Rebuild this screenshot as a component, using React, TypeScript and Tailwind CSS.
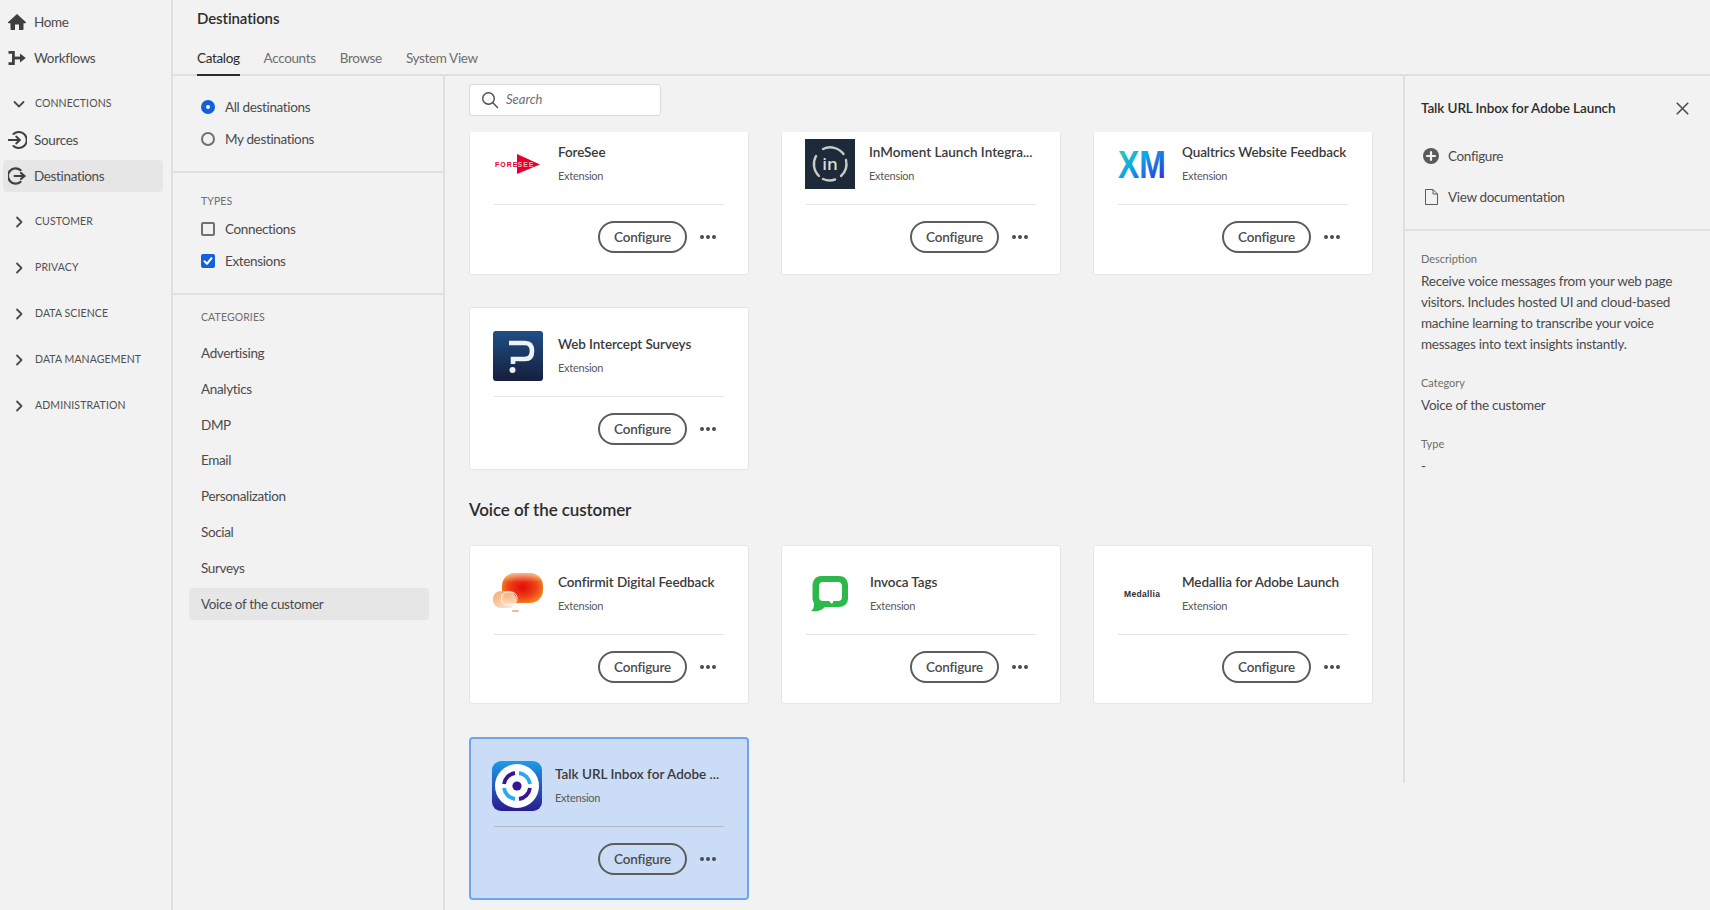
import React from "react";

const font = { fontFamily: 'Lato, sans-serif' };

function Chevron({ open }: { open?: boolean }) {
  return (
    <svg width="12" height="12" viewBox="0 0 12 12" className="text-[#4b4b4b]" fill="none" stroke="currentColor" strokeWidth="1.8" strokeLinecap="round" strokeLinejoin="round">
      {open ? <path d="M1.5 4 L6 8.5 L10.5 4" /> : <path d="M4 1.5 L8.5 6 L4 10.5" />}
    </svg>
  );
}

function HomeIcon() {
  return (
    <svg width="18" height="16" viewBox="0 0 18 16" fill="#3f3f3f">
      <path d="M9 0 L18 8.2 C18.2 8.8 17.8 9.2 17.3 9.2 L15.5 9.2 L15.5 15.2 C15.5 15.6 15.2 16 14.8 16 L11 16 L11 10.5 L7 10.5 L7 16 L3.2 16 C2.8 16 2.5 15.6 2.5 15.2 L2.5 9.2 L0.7 9.2 C0.2 9.2 -0.2 8.8 0 8.2 Z" />
    </svg>
  );
}

function WorkflowIcon() {
  return (
    <svg width="18" height="14" viewBox="0 0 18 14" fill="none" stroke="#3f3f3f" strokeWidth="2.8">
      <path d="M0.5 1.4 H5.4 V12.6 H0.5" />
      <path d="M5 7 H13" />
      <path d="M12 2.6 L17.8 7 L12 11.4 Z" fill="#3f3f3f" stroke="none" />
    </svg>
  );
}

function SourcesIcon() {
  return (
    <svg width="19" height="18" viewBox="0 0 19 18" fill="none" stroke="#3f3f3f" strokeWidth="2" strokeLinecap="round">
      <path d="M5.5 3 A8 8 0 1 1 5.5 15" />
      <path d="M0.8 9 H11.5" />
      <path d="M8.2 5.6 L11.8 9 L8.2 12.4" strokeLinejoin="round" />
    </svg>
  );
}

function DestIcon() {
  return (
    <svg width="18" height="18" viewBox="0 0 18 18" fill="none" stroke="#3f3f3f" strokeWidth="2.2" strokeLinecap="round">
      <path d="M12.5 3.2 A7.6 7.6 0 1 0 12.5 14.8" />
      <path d="M6.5 9 H16" />
      <path d="M13 6 L16.6 9 L13 12" strokeLinejoin="round" />
    </svg>
  );
}

function NavItem({ icon, label, active }: { icon: React.ReactNode; label: string; active?: boolean }) {
  return (
    <div className={active ? "flex h-8 items-center rounded bg-[#e6e6e6] pl-[5px] mr-2 ml-[3px]" : "flex h-8 items-center pl-[5px] mr-2 ml-[3px]"}>
      <span className="flex w-[26px] justify-start">{icon}</span>
      <span className="text-[13.5px] tracking-[-0.35px] text-[#4b4b4b]">{label}</span>
    </div>
  );
}

function Section({ label, open }: { label: string; open?: boolean }) {
  return (
    <div className="flex h-8 items-center pl-[13px]">
      <span className="flex w-[22px]"><Chevron open={open} /></span>
      <span className="text-[10.5px] tracking-[0.1px] text-[#505050]">{label}</span>
    </div>
  );
}

function Sidebar() {
  return (
    <aside className="w-[173px] shrink-0 border-r-2 border-[#dfdfdf] pt-[6px]">
      <NavItem icon={<HomeIcon />} label="Home" />
      <div className="h-[4px]" />
      <NavItem icon={<WorkflowIcon />} label="Workflows" />
      <div className="h-[14px]" />
      <Section label="CONNECTIONS" open />
      <div className="h-1" />
      <NavItem icon={<SourcesIcon />} label="Sources" />
      <div className="h-[4px]" />
      <NavItem icon={<DestIcon />} label="Destinations" active />
      <div className="h-[14px]" />
      <div className="flex flex-col gap-[14px]">
        <Section label="CUSTOMER" />
        <Section label="PRIVACY" />
        <Section label="DATA SCIENCE" />
        <Section label="DATA MANAGEMENT" />
        <Section label="ADMINISTRATION" />
      </div>
    </aside>
  );
}

function Tabs() {
  const tabs = ["Catalog", "Accounts", "Browse", "System View"];
  return (
    <header className="h-[76px] border-b-2 border-[#dfdfdf] pl-[24px]">
      <h1 className="pt-[7px] text-[15px] font-semibold leading-[22px] tracking-[-0.1px] text-[#2c2c2c]">Destinations</h1>
      <div className="mt-[18px] flex gap-[24px]">
        {tabs.map((t, i) => (
          <div key={t} className={i === 0 ? "h-[29px] border-b-2 border-[#2c2c2c] text-[13.5px] leading-[22px] tracking-[-0.35px] text-[#2c2c2c]" : "h-[29px] text-[13.5px] leading-[22px] tracking-[-0.35px] text-[#6e6e6e]"}>
            {t}
          </div>
        ))}
      </div>
    </header>
  );
}

function Filters() {
  const cats = ["Advertising", "Analytics", "DMP", "Email", "Personalization", "Social", "Surveys", "Voice of the customer"];
  return (
    <div className="w-[272px] shrink-0 border-r-2 border-[#dfdfdf]">
      <div className="flex h-[97px] flex-col gap-[18px] border-b-2 border-[#dfdfdf] pl-[28px] pt-[24px]">
        <label className="flex h-[14px] items-center gap-[10px]">
          <span className="flex h-[14px] w-[14px] items-center justify-center rounded-full bg-[#1260e0]">
            <span className="h-[4px] w-[4px] rounded-full bg-white" />
          </span>
          <span className="text-[13.5px] tracking-[-0.35px] text-[#4b4b4b]">All destinations</span>
        </label>
        <label className="flex h-[14px] items-center gap-[10px]">
          <span className="h-[14px] w-[14px] rounded-full border-2 border-[#707070]" />
          <span className="text-[13.5px] tracking-[-0.35px] text-[#4b4b4b]">My destinations</span>
        </label>
      </div>
      <div className="h-[122px] border-b-2 border-[#dfdfdf] pl-[28px] pt-[20px]">
        <div className="text-[10.5px] leading-[16px] tracking-[0.1px] text-[#6e6e6e]">TYPES</div>
        <div className="mt-[13px] flex flex-col gap-[18px]">
          <label className="flex h-[14px] items-center gap-[10px]">
            <span className="h-[14px] w-[14px] rounded-[2px] border-2 border-[#707070]" />
            <span className="text-[13.5px] tracking-[-0.35px] text-[#4b4b4b]">Connections</span>
          </label>
          <label className="flex h-[14px] items-center gap-[10px]">
            <span className="flex h-[14px] w-[14px] items-center justify-center rounded-[2px] bg-[#1260e0]">
              <svg width="10" height="10" viewBox="0 0 10 10" fill="none" stroke="white" strokeWidth="2" strokeLinecap="round" strokeLinejoin="round">
                <path d="M1.5 5.2 L4 7.8 L8.5 2.2" />
              </svg>
            </span>
            <span className="text-[13.5px] tracking-[-0.35px] text-[#4b4b4b]">Extensions</span>
          </label>
        </div>
      </div>
      <div className="pt-[14px]">
        <div className="pl-[28px] text-[10.5px] leading-[16px] tracking-[0.1px] text-[#6e6e6e]">CATEGORIES</div>
        <div className="mt-[12px] flex flex-col gap-[3.85px] pl-[16px] pr-[14px]">
          {cats.map((c, i) => (
            <div key={c} className={i === 7 ? "flex h-[32px] items-center rounded bg-[#e6e6e6] pl-[12px] text-[13.5px] tracking-[-0.35px] text-[#4b4b4b]" : "flex h-[32px] items-center pl-[12px] text-[13.5px] tracking-[-0.35px] text-[#4b4b4b]"}>
              {c}
            </div>
          ))}
        </div>
      </div>
    </div>
  );
}

function ForeSeeLogo() {
  return (
    <svg width="50" height="50" viewBox="1 0 50 50">
      <path d="M25 15 L48 25.5 L25 35 Z" fill="#e4002b" />
      <text x="3" y="28" fontSize="7" fontWeight="700" letterSpacing="1" fill="#e4002b" style={{ fontFamily: '"Liberation Sans", sans-serif' }}>FORE</text>
      <text x="25.5" y="28" fontSize="7" fontWeight="700" letterSpacing="1" fill="#f7a8b5" style={{ fontFamily: '"Liberation Sans", sans-serif' }}>SEE</text>
    </svg>
  );
}

function InMomentLogo() {
  return (
    <svg width="50" height="50" viewBox="0 0 50 50">
      <rect width="50" height="50" fill="#1c2a39" />
      <g fill="none" stroke="#c9c9c5" strokeWidth="2.4" strokeLinecap="round">
        <path d="M18 10 A16.5 16.5 0 0 1 38.5 15" />
        <path d="M41 21 A16.5 16.5 0 0 1 36 37" />
        <path d="M30 40.5 A16.5 16.5 0 0 1 18 40" />
        <path d="M14 37 A16.5 16.5 0 0 1 11 17" />
      </g>
      <text x="25" y="31" textAnchor="middle" fontSize="17" fontWeight="600" fill="#d8d8d4" style={{ fontFamily: '"Open Sans", sans-serif' }}>in</text>
    </svg>
  );
}

function XMLogo() {
  return (
    <svg width="50" height="50" viewBox="0 0 50 50">
      <defs>
        <linearGradient id="xmg" x1="0" y1="0" x2="1" y2="1">
          <stop offset="0" stopColor="#2fdca0" />
          <stop offset="0.4" stopColor="#12a8e8" />
          <stop offset="1" stopColor="#3a10d8" />
        </linearGradient>
      </defs>
      <text transform="translate(1 39) scale(0.82 1)" fontSize="39" fontWeight="700" fill="url(#xmg)" style={{ fontFamily: '"Liberation Sans", sans-serif' }}>XM</text>
    </svg>
  );
}

function SurveyLogo() {
  return (
    <svg width="50" height="50" viewBox="0 0 50 50">
      <defs>
        <linearGradient id="sv" x1="0" y1="0" x2="0" y2="1">
          <stop offset="0" stopColor="#1f4e86" />
          <stop offset="1" stopColor="#161f3d" />
        </linearGradient>
      </defs>
      <rect width="50" height="50" rx="3" fill="url(#sv)" />
      <path d="M16 12 H32 C37 12 39 15 39 20 C39 25 37 28 32 28 H20 V33" fill="none" stroke="#eef1f6" strokeWidth="4.6" />
      <circle cx="19.5" cy="39" r="3" fill="#eef1f6" />
    </svg>
  );
}

function ConfirmitLogo() {
  return (
    <svg width="50" height="50" viewBox="1 0 50 50">
      <defs>
        <radialGradient id="cf" cx="0.5" cy="0.48" r="0.62">
          <stop offset="0" stopColor="#e30a0a" />
          <stop offset="0.55" stopColor="#ec4318" />
          <stop offset="1" stopColor="#f79a1e" />
        </radialGradient>
        <linearGradient id="gl" x1="0" y1="0" x2="0" y2="1">
          <stop offset="0" stopColor="#ffffff" stopOpacity="0.5" />
          <stop offset="0.3" stopColor="#ffffff" stopOpacity="0" />
        </linearGradient>
        <linearGradient id="cf2" x1="0" y1="0" x2="1" y2="1">
          <stop offset="0" stopColor="#f5a05e" />
          <stop offset="1" stopColor="#fdeee0" />
        </linearGradient>
      </defs>
      <rect x="10" y="4" width="41" height="30" rx="13" fill="url(#cf)" />
      <rect x="10" y="4" width="41" height="30" rx="13" fill="url(#gl)" />
      <rect x="1" y="22" width="23" height="17" rx="8" fill="url(#cf2)" opacity="0.92" />
      <rect x="9.5" y="23" width="15.5" height="13" rx="6" fill="none" stroke="#fff" strokeWidth="0.9" />
      <rect x="20" y="41" width="7" height="2" rx="1" fill="#f6b98a" />
    </svg>
  );
}

function InvocaLogo() {
  return (
    <svg width="50" height="50" viewBox="0 0 50 50">
      <path fillRule="evenodd" fill="#2db84b" d="M16 7 H34 C40 7 43 11 43 17 V29 C43 35 39 38 33 38 H20 C16 42 12 43 6 42 C9 40 9 37 9 34 C8 32 7.5 31 7.5 29 V17 C7.5 11 11 7 16 7 Z M18 13 C15.5 13 14 14.5 14 17 V28 C14 30.5 15.5 32 18 32 H24 L27 35 L28.5 32 H33 C35.5 32 37 30.5 37 28 V17 C37 14.5 35.5 13 33 13 Z" />
    </svg>
  );
}

function MedalliaLogo() {
  return (
    <svg width="50" height="50" viewBox="0 0 50 50">
      <text x="7" y="28" fontSize="8.5" fontWeight="700" textLength="36" fill="#2c2c2c" style={{ fontFamily: '"Liberation Sans", sans-serif' }}>Medallia</text>
    </svg>
  );
}

function TalkLogo() {
  return (
    <svg width="50" height="50" viewBox="0 0 50 50">
      <defs>
        <linearGradient id="tk" x1="0" y1="0" x2="0" y2="1">
          <stop offset="0" stopColor="#1e9be8" />
          <stop offset="1" stopColor="#2a1a90" />
        </linearGradient>
      </defs>
      <rect width="50" height="50" rx="9" fill="url(#tk)" />
      <circle cx="25" cy="25" r="22" fill="#fff" />
      <circle cx="25" cy="25" r="4.6" fill="#33169a" />
      <g fill="none" strokeWidth="3.8" strokeLinecap="butt">
        <path d="M12 23 A13 13 0 0 1 23 12" stroke="#33169a" />
        <path d="M27 12 A13 13 0 0 1 38 23" stroke="#2ba9f0" />
        <path d="M38 27 A13 13 0 0 1 27 38" stroke="#33169a" />
        <path d="M23 38 A13 13 0 0 1 12 27" stroke="#2ba9f0" />
      </g>
    </svg>
  );
}

type CardProps = {
  logo: React.ReactNode;
  title: string;
  h: string;
  pt?: string;
  titleX: string;
  logoX: string;
  selected?: boolean;
  wide?: boolean;
};

function Card({ logo, title, h, pt, titleX, logoX, selected, wide }: CardProps) {
  const base = selected
    ? "w-[280px] rounded-[4px] border-2 border-[#6ea4f0] bg-[#cbdcf6]"
    : "w-[280px] rounded-[3px] bg-white shadow-[inset_0_0_0_1px_#e6e6e6]";
  return (
    <div className={`${base} ${h} ${pt ?? "pt-[24px]"}`}>
      <div className={`flex h-[50px] items-start ${logoX}`}>
        <span className="block h-[50px] w-[50px] shrink-0">{logo}</span>
        <div className={`min-w-0 ${titleX}`}>
          <div className={wide ? "pt-[2px] text-[13.5px] font-semibold leading-[22px] tracking-[0px] text-[#3a3a3a] whitespace-nowrap" : "pt-[2px] text-[13.5px] font-semibold leading-[22px] tracking-[-0.1px] text-[#3a3a3a] whitespace-nowrap"}>{title}</div>
          <div className="mt-[3px] text-[11px] leading-[20px] tracking-[-0.25px] text-[#5a5a5a]">Extension</div>
        </div>
      </div>
      <div className={selected ? "mt-[15px] ml-[23px] h-px w-[230px] bg-[#b3b8c0]" : "mt-[15px] ml-[25px] h-px w-[230px] bg-[#e4e4e4]"} />
      <div className={selected ? "mt-[16px] flex items-center pl-[127px]" : "mt-[16px] flex items-center pl-[129px]"}>
        <span className="flex h-[32px] w-[89px] items-center justify-center rounded-full border-2 border-[#5c5c5c] text-[13.5px] font-semibold tracking-[-0.2px] text-[#4b4b4b]">Configure</span>
        <span className="ml-[13px] flex w-[16px] justify-between">
          <span className="h-[4px] w-[4px] rounded-full bg-[#4b4b4b]" />
          <span className="h-[4px] w-[4px] rounded-full bg-[#4b4b4b]" />
          <span className="h-[4px] w-[4px] rounded-full bg-[#4b4b4b]" />
        </span>
      </div>
    </div>
  );
}

function Catalog() {
  return (
    <div className="flex h-[834px] min-w-0 flex-1 flex-col">
      <div className="h-[56px] shrink-0 pl-[24px] pt-[8px]">
        <div className="flex h-[32px] w-[192px] items-center rounded-[3px] border border-[#dadada] bg-white pl-[11px]">
          <svg width="18" height="18" viewBox="0 0 18 18" fill="none" stroke="#4b4b4b" strokeWidth="1.4" strokeLinecap="round">
            <circle cx="7.5" cy="7.5" r="5.8" />
            <path d="M11.8 11.8 L16.5 16.5" />
          </svg>
          <span className="ml-[7px] text-[13px] italic text-[#6e6e6e]">Search</span>
        </div>
      </div>
      <div className="min-h-0 flex-1 overflow-hidden pl-[24px]">
        <div className="-mt-[17px]">
          <div className="flex gap-[32px]">
            <Card logo={<ForeSeeLogo />} title="ForeSee" h="h-[160px]" logoX="pl-[24px]" titleX="ml-[15px] w-[170px]" />
            <Card wide logo={<InMomentLogo />} title="InMoment Launch Integra..." h="h-[160px]" logoX="pl-[24px]" titleX="ml-[14px] w-[170px]" />
            <Card logo={<XMLogo />} title="Qualtrics Website Feedback" h="h-[160px]" logoX="pl-[24px]" titleX="ml-[15px] w-[172px]" />
          </div>
          <div className="mt-[32px]">
            <Card logo={<SurveyLogo />} title="Web Intercept Surveys" h="h-[163px]" logoX="pl-[24px]" titleX="ml-[15px] w-[170px]" />
          </div>
          <h2 className="mt-[28px] h-[47px] text-[17px] font-semibold leading-[24px] tracking-[-0.1px] text-[#2c2c2c]">Voice of the customer</h2>
          <div className="flex gap-[32px]">
            <Card logo={<ConfirmitLogo />} title="Confirmit Digital Feedback" h="h-[159px]" logoX="pl-[24px]" titleX="ml-[15px] w-[172px]" />
            <Card logo={<InvocaLogo />} title="Invoca Tags" h="h-[159px]" logoX="pl-[24px]" titleX="ml-[15px] w-[170px]" />
            <Card logo={<MedalliaLogo />} title="Medallia for Adobe Launch" h="h-[159px]" logoX="pl-[24px]" titleX="ml-[15px] w-[172px]" />
          </div>
          <div className="mt-[33px]">
            <Card selected wide logo={<TalkLogo />} title="Talk URL Inbox for Adobe ..." h="h-[163px]" pt="pt-[22px]" logoX="pl-[21px]" titleX="ml-[13px] w-[172px]" />
          </div>
        </div>
      </div>
    </div>
  );
}

function Details() {
  return (
    <div className="h-[707px] w-[307px] shrink-0 border-l-2 border-[#dfdfdf]">
      <div className="h-[155px] border-b-2 border-[#dfdfdf] pl-[16px] pr-[16px]">
        <div className="flex h-[64px] items-center justify-between pr-[5px]">
          <span className="text-[13.5px] font-semibold tracking-[-0.1px] text-[#2c2c2c]">Talk URL Inbox for Adobe Launch</span>
          <svg width="13" height="13" viewBox="0 0 13 13" fill="none" stroke="#4b4b4b" strokeWidth="1.6">
            <path d="M0.8 0.8 L12.2 12.2 M12.2 0.8 L0.8 12.2" />
          </svg>
        </div>
        <div className="mt-[6px] flex h-[20px] items-center pl-[2px]">
          <svg width="16" height="16" viewBox="0 0 16 16">
            <circle cx="8" cy="8" r="8" fill="#5a5a5a" />
            <path d="M8 4 V12 M4 8 H12" stroke="#f2f2f2" strokeWidth="2.2" strokeLinecap="round" />
          </svg>
          <span className="ml-[9px] text-[13.5px] tracking-[-0.35px] text-[#4b4b4b]">Configure</span>
        </div>
        <div className="mt-[21px] flex h-[20px] items-center pl-[4px]">
          <svg width="13" height="16" viewBox="0 0 13 16" fill="none" stroke="#5a5a5a" strokeWidth="1">
            <path d="M0.5 0.5 H8 L12.5 5 V15.5 H0.5 Z" />
            <path d="M8 0.5 V5 H12.5" />
          </svg>
          <span className="ml-[10px] text-[13.5px] tracking-[-0.35px] text-[#4b4b4b]">View documentation</span>
        </div>
      </div>
      <div className="pl-[16px] pr-[12px] pt-[20px]">
        <div className="text-[11px] leading-[16px] text-[#6e6e6e]">Description</div>
        <p className="mt-[4px] text-[13.5px] leading-[21px] tracking-[-0.25px] text-[#4b4b4b]">
          Receive voice messages from your web page visitors. Includes hosted UI and cloud-based machine learning to transcribe your voice messages into text insights instantly.
        </p>
        <div className="mt-[20px] text-[11px] leading-[16px] text-[#6e6e6e]">Category</div>
        <div className="mt-[4px] text-[13.5px] leading-[21px] tracking-[-0.25px] text-[#4b4b4b]">Voice of the customer</div>
        <div className="mt-[20px] text-[11px] leading-[16px] text-[#6e6e6e]">Type</div>
        <div className="mt-[4px] text-[13.5px] leading-[21px] text-[#4b4b4b]">-</div>
      </div>
    </div>
  );
}

export default function App() {
  return (
    <div className="flex h-[910px] w-[1710px] overflow-hidden bg-[#f2f2f2]" style={font}>
      <Sidebar />
      <div className="flex min-w-0 flex-1 flex-col">
        <Tabs />
        <div className="flex min-h-0 flex-1">
          <Filters />
          <Catalog />
          <Details />
        </div>
      </div>
    </div>
  );
}
